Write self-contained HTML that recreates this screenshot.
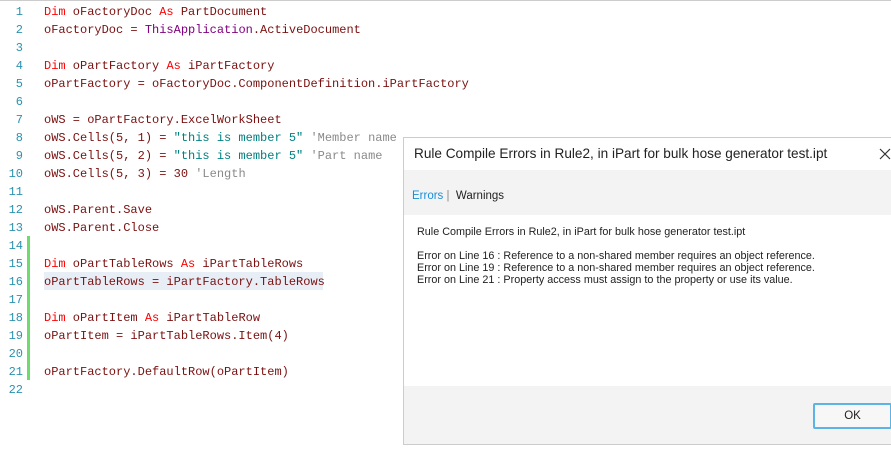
<!DOCTYPE html>
<html><head><style>
body{margin:0;width:891px;height:453px;background:#fff;position:relative;overflow:hidden;font-family:"Liberation Sans",sans-serif}
#top{position:absolute;left:0;top:0;width:891px;height:1px;background:#ccc}
.ln{position:absolute;left:0;width:23px;text-align:right;font:12px "Liberation Mono",monospace;color:#2b91af}
.cd{position:absolute;left:44px;font:12px "Liberation Mono",monospace;color:#7a1010;white-space:pre}
.k{color:#f00}.p{color:#800080}.s{color:#008080}.c{color:#8a8a8a}
#bar{position:absolute;left:27px;top:236px;width:3px;height:144px;background:#6ddc6d}
#hl{position:absolute;left:44px;top:272px;width:279px;height:18px;background:#e8eef6}
#dlg{position:absolute;left:403px;top:137px;width:490px;height:306px;border:1px solid #ccc;background:#fff;font-size:12px;color:#222}
</style></head><body>
<div id="top"></div>
<div id="hl"></div>
<div id="bar"></div>
<div class="ln" style="top:5px">1</div><div class="cd" style="top:5px"><span class="k">Dim</span> oFactoryDoc <span class="k">As</span> PartDocument</div>
<div class="ln" style="top:23px">2</div><div class="cd" style="top:23px">oFactoryDoc = <span class="p">ThisApplication</span>.ActiveDocument</div>
<div class="ln" style="top:41px">3</div>
<div class="ln" style="top:59px">4</div><div class="cd" style="top:59px"><span class="k">Dim</span> oPartFactory <span class="k">As</span> iPartFactory</div>
<div class="ln" style="top:77px">5</div><div class="cd" style="top:77px">oPartFactory = oFactoryDoc.ComponentDefinition.iPartFactory</div>
<div class="ln" style="top:95px">6</div>
<div class="ln" style="top:113px">7</div><div class="cd" style="top:113px">oWS = oPartFactory.ExcelWorkSheet</div>
<div class="ln" style="top:131px">8</div><div class="cd" style="top:131px">oWS.Cells(5, 1) = <span class="s">"this is member 5"</span> <span class="c">'Member name</span></div>
<div class="ln" style="top:149px">9</div><div class="cd" style="top:149px">oWS.Cells(5, 2) = <span class="s">"this is member 5"</span> <span class="c">'Part name</span></div>
<div class="ln" style="top:167px">10</div><div class="cd" style="top:167px">oWS.Cells(5, 3) = 30 <span class="c">'Length</span></div>
<div class="ln" style="top:185px">11</div>
<div class="ln" style="top:203px">12</div><div class="cd" style="top:203px">oWS.Parent.Save</div>
<div class="ln" style="top:221px">13</div><div class="cd" style="top:221px">oWS.Parent.Close</div>
<div class="ln" style="top:239px">14</div>
<div class="ln" style="top:257px">15</div><div class="cd" style="top:257px"><span class="k">Dim</span> oPartTableRows <span class="k">As</span> iPartTableRows</div>
<div class="ln" style="top:275px">16</div><div class="cd" style="top:275px">oPartTableRows = iPartFactory.TableRows</div>
<div class="ln" style="top:293px">17</div>
<div class="ln" style="top:311px">18</div><div class="cd" style="top:311px"><span class="k">Dim</span> oPartItem <span class="k">As</span> iPartTableRow</div>
<div class="ln" style="top:329px">19</div><div class="cd" style="top:329px">oPartItem = iPartTableRows.Item(4)</div>
<div class="ln" style="top:347px">20</div>
<div class="ln" style="top:365px">21</div><div class="cd" style="top:365px">oPartFactory.DefaultRow(oPartItem)</div>
<div class="ln" style="top:383px">22</div>
<div id="dlg">
<div style="position:absolute;left:10px;top:8px;font-size:13.6px;color:#222">Rule Compile Errors in Rule2, in iPart for bulk hose generator test.ipt</div>
<svg style="position:absolute;left:475px;top:10px" width="12" height="12"><path d="M1 1L11 11M11 1L1 11" stroke="#333" stroke-width="1.2"/></svg>
<div style="position:absolute;left:0;top:32px;width:490px;height:45px;background:#f3f3f3"></div>
<div style="position:absolute;left:8px;top:52px;font-size:11.5px"><span style="color:#1a8fd6">Errors</span> <span style="color:#888">|</span>&nbsp; Warnings</div>
<div style="position:absolute;left:13px;top:88px;font-size:10.8px;line-height:12px;color:#222">Rule Compile Errors in Rule2, in iPart for bulk hose generator test.ipt<br><br>Error on Line 16 : Reference to a non-shared member requires an object reference.<br>Error on Line 19 : Reference to a non-shared member requires an object reference.<br>Error on Line 21 : Property access must assign to the property or use its value.</div>
<div style="position:absolute;left:0;top:248px;width:490px;height:58px;background:#f3f3f3"></div>
<div style="position:absolute;left:409px;top:265px;width:75px;height:22px;border:2px solid #5cb4e6;border-radius:2px;background:#f7f7f7;text-align:center;line-height:22px;font-size:11.5px">OK</div>
</div>
</body></html>
